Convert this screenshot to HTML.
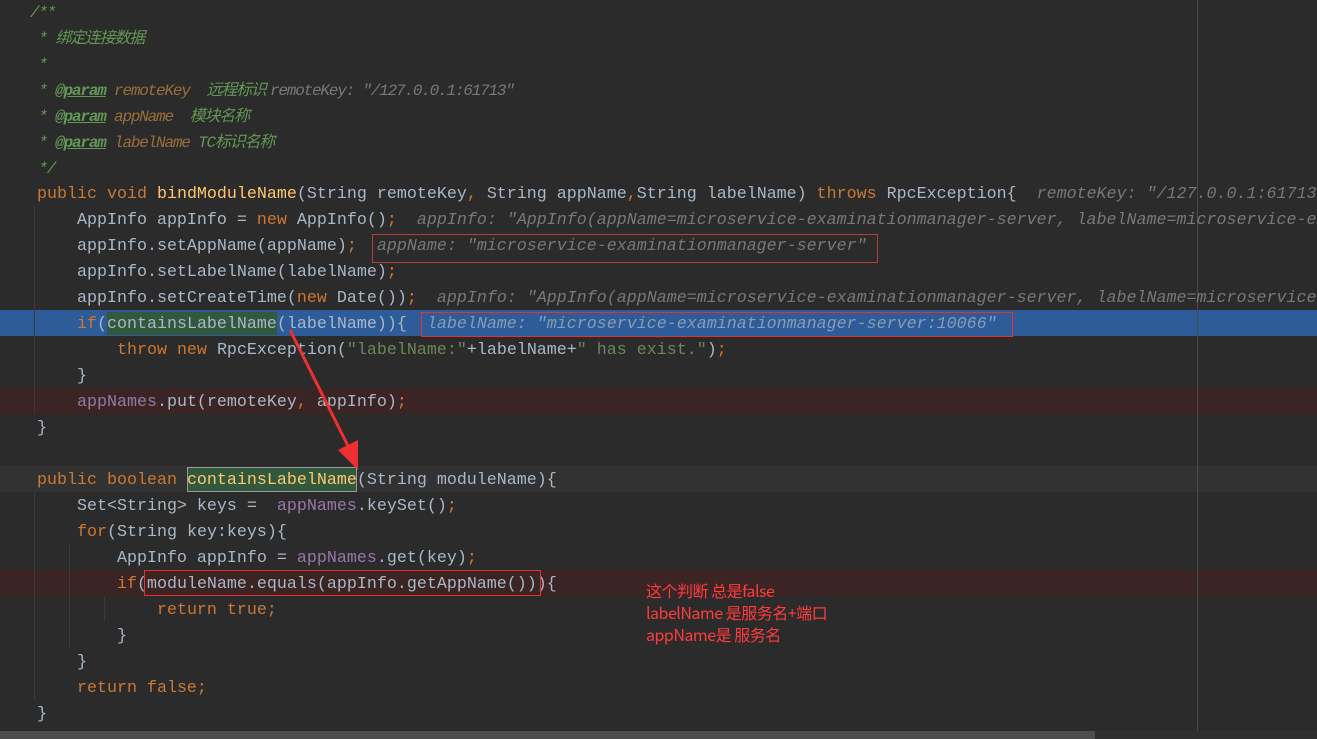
<!DOCTYPE html>
<html><head><meta charset="utf-8"><style>
html,body{margin:0;padding:0;background:#2b2b2b;width:1317px;height:739px;overflow:hidden;position:relative}
.r{position:absolute;left:0;width:1317px;height:26px}
.l{position:absolute;left:37px;white-space:pre;font-family:"Liberation Mono","Noto Sans CJK SC",monospace;font-size:16.67px;line-height:26px;color:#a9b7c6;padding-top:2px;right:0;overflow:hidden}
.c{font-size:16px;letter-spacing:-1.2px;font-style:italic;color:#629755;left:30px}
.k{color:#cc7832}.m{color:#ffc66d}.f{color:#9876aa}.s{color:#6a8759}
.h{color:#787878;font-style:italic}
.p{color:#9a6e3a}.t{text-decoration:underline;font-weight:bold;color:#629755}
.g{position:absolute;width:1px;background:#3a3a3a}
.b{position:absolute;border:1px solid #e83030;box-sizing:border-box}
.note{position:absolute;left:646px;color:#ff3b3b;font-family:"Noto Sans CJK SC","Liberation Sans",sans-serif;font-size:16px;line-height:22px;letter-spacing:-0.5px}
</style></head><body>
<div class="r" style="top:388px;background:#3a2424"></div>
<div class="r" style="top:466px;background:#323232"></div>
<div class="r" style="top:570px;background:#3a2424"></div>
<div class="r" style="top:310px;background:#2d5c98"></div>
<div style="position:absolute;left:1197px;top:0;width:1px;height:731px;background:#4a4a4a"></div>
<div class="g" style="left:34px;top:206px;height:208px"></div>
<div class="g" style="left:34px;top:492px;height:208px"></div>
<div class="g" style="left:69px;top:544px;height:104px"></div>
<div class="g" style="left:104px;top:596px;height:26px"></div>
<div style="position:absolute;left:107px;top:312px;width:170px;height:23px;background:#32593d"></div>
<div style="position:absolute;left:187px;top:467px;width:170px;height:25px;background:#32593d;border:1px solid #999;box-sizing:border-box"></div>

<div class="l c" style="top:-2px">/**</div>
<div class="l c" style="top:24px"> * 绑定连接数据</div>
<div class="l c" style="top:50px"> *</div>
<div class="l c" style="top:76px"> * <span class="t">@param</span> <span class="p">remoteKey</span>  远程标识</div>
<div class="l c" style="top:76px;left:270px;color:#787878">remoteKey: "/127.0.0.1:61713"</div>
<div class="l c" style="top:102px"> * <span class="t">@param</span> <span class="p">appName</span>  模块名称</div>
<div class="l c" style="top:128px"> * <span class="t">@param</span> <span class="p">labelName</span> TC标识名称</div>
<div class="l c" style="top:154px"> */</div>

<div class="l" style="top:180px"><span class="k">public void </span><span class="m">bindModuleName</span>(String remoteKey<span class="k">, </span>String appName<span class="k">,</span>String labelName) <span class="k">throws </span>RpcException{  <span class="h">remoteKey: "/127.0.0.1:61713"</span></div>
<div class="l" style="top:206px">    AppInfo appInfo = <span class="k">new </span>AppInfo()<span class="k">;</span>  <span class="h">appInfo: "AppInfo(appName=microservice-examinationmanager-server, labelName=microservice-examinationmanager-server:10066)"</span></div>
<div class="l" style="top:232px">    appInfo.setAppName(appName)<span class="k">;</span>  <span class="h">appName: "microservice-examinationmanager-server"</span></div>
<div class="l" style="top:258px">    appInfo.setLabelName(labelName)<span class="k">;</span></div>
<div class="l" style="top:284px">    appInfo.setCreateTime(<span class="k">new </span>Date())<span class="k">;</span>  <span class="h">appInfo: "AppInfo(appName=microservice-examinationmanager-server, labelName=microservice-e"</span></div>
<div class="l" style="top:310px">    <span class="k">if</span>(containsLabelName(labelName)){  <span class="h" style="color:#8a9bb5">labelName: "microservice-examinationmanager-server:10066"</span></div>
<div class="l" style="top:336px">        <span class="k">throw new </span>RpcException(<span class="s">"labelName:"</span>+labelName+<span class="s">" has exist."</span>)<span class="k">;</span></div>
<div class="l" style="top:362px">    }</div>
<div class="l" style="top:388px">    <span class="f">appNames</span>.put(remoteKey<span class="k">, </span>appInfo)<span class="k">;</span></div>
<div class="l" style="top:414px">}</div>
<div class="l" style="top:466px"><span class="k">public boolean </span><span class="m">containsLabelName</span>(String moduleName){</div>
<div class="l" style="top:492px">    Set&lt;String&gt; keys =  <span class="f">appNames</span>.keySet()<span class="k">;</span></div>
<div class="l" style="top:518px">    <span class="k">for</span>(String key:keys){</div>
<div class="l" style="top:544px">        AppInfo appInfo = <span class="f">appNames</span>.get(key)<span class="k">;</span></div>
<div class="l" style="top:570px">        <span class="k">if</span>(moduleName.equals(appInfo.getAppName())){</div>
<div class="l" style="top:596px">            <span class="k">return true;</span></div>
<div class="l" style="top:622px">        }</div>
<div class="l" style="top:648px">    }</div>
<div class="l" style="top:674px">    <span class="k">return false;</span></div>
<div class="l" style="top:700px">}</div>

<div class="b" style="left:372px;top:234px;width:506px;height:29px;border-color:#b04040"></div>
<div class="b" style="left:421px;top:312px;width:592px;height:25px"></div>
<div class="b" style="left:144px;top:570px;width:397px;height:26px"></div>

<svg style="position:absolute;left:0;top:0" width="1317" height="739">
<line x1="290" y1="330" x2="350" y2="450" stroke="#f03030" stroke-width="3"/>
<polygon points="358,470 338,450 358,440" fill="#f03030"/>
</svg>

<div class="note" style="top:579px">这个判断 总是false</div>
<div class="note" style="top:601px">labelName 是服务名+端口</div>
<div class="note" style="top:623px">appName是 服务名</div>

<div style="position:absolute;left:0;top:731px;width:1095px;height:8px;background:#4d4d4d"></div>
<div style="position:absolute;left:1095px;top:731px;width:222px;height:8px;background:#2f2f2f"></div>
</body></html>
